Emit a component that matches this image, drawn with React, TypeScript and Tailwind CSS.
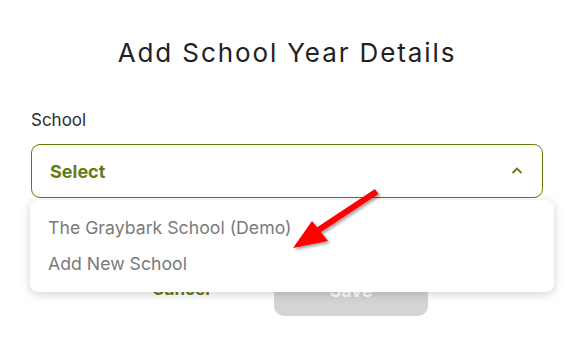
import React from "react";

export default function App() {
  return (
    <div
      className="relative w-[574px] h-[344px] bg-white overflow-hidden"
      style={{ fontFamily: "Inter, 'Noto Sans', sans-serif" }}
    >
      <div className="px-[31px] pt-[35px]">
        <h1 className="text-center text-[26px] leading-[36px] tracking-[1.9px] text-[#1f2125] font-normal">
          Add School Year Details
        </h1>

        <div className="mt-[38px] text-[17px] leading-[22px] text-[#2d2f33]">School</div>

        <div className="relative mt-[13px]">
          <div className="flex items-center justify-between h-[54px] w-[512px] rounded-[9px] border border-[#5c7d0a] pl-[18px] pr-[18px]">
            <span className="text-[18px] font-bold text-[#5f7d17]">Select</span>
            <svg width="14" height="14" viewBox="0 0 14 14" fill="none">
              <path d="M2.5 9L7 4.5L11.5 9" stroke="#5f7d17" strokeWidth="1.8" />
            </svg>
          </div>

          <div className="absolute left-[-1px] top-[56px] w-[524px] h-[92px] z-10 rounded-[8px] bg-white shadow-[0_2px_10px_rgba(0,0,0,0.18)] pl-[18px] pt-[10px]">
            <div className="h-[36px] flex items-center text-[17.7px] text-[#7a7a7a]">
              The Graybark School (Demo)
            </div>
            <div className="h-[36px] flex items-center text-[17.7px] text-[#7a7a7a]">
              Add New School
            </div>
          </div>
        </div>

        <div className="flex items-center mt-[66px] pl-[121px]">
          <span className="w-[62px] text-[17px] font-bold text-[#5f7d17]">Cancel</span>
          <div className="ml-[60px] w-[154px] h-[52px] rounded-[10px] bg-[#d4d4d4] flex items-center justify-center text-[18px] font-bold text-white">
            Save
          </div>
        </div>
      </div>

      <svg
        className="absolute left-0 top-0 z-20 pointer-events-none"
        width="574"
        height="344"
        viewBox="0 0 574 344"
      >
        <defs>
          <filter id="sh" x="-20%" y="-20%" width="140%" height="140%">
            <feDropShadow dx="2" dy="2" stdDeviation="1.5" floodColor="#000" floodOpacity="0.35" />
          </filter>
        </defs>
        <g filter="url(#sh)" fill="#ff0000">
          <polygon points="375,189 378.5,194 318,234 314.5,229" />
          <polygon points="293,248 312,221 328,241" />
        </g>
      </svg>
    </div>
  );
}
